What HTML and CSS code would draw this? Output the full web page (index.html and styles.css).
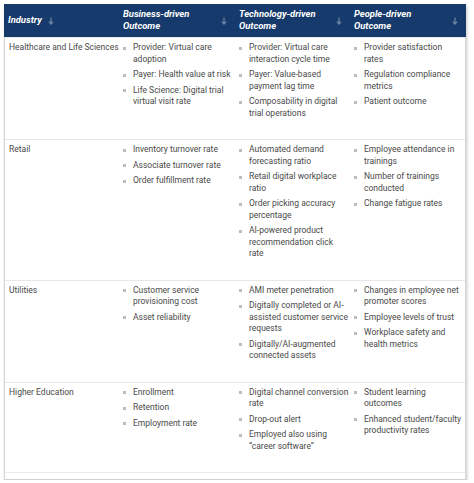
FILE: index.html
```html
<!DOCTYPE html>
<html>
<head>
<meta charset="utf-8">
<link rel="stylesheet" href="styles.css">
</head>
<body>
<div class="card">
  <div class="row head">
    <div class="hcell"><span class="htext">Industry</span><svg class="arrow" viewBox="0 0 6 8"><path d="M3 0.5V7M0.8 4.6L3 7 5.2 4.6"/></svg></div>
    <div class="hcell"><span class="htext">Business-driven Outcome</span><svg class="arrow" viewBox="0 0 6 8"><path d="M3 0.5V7M0.8 4.6L3 7 5.2 4.6"/></svg></div>
    <div class="hcell"><span class="htext">Technology-driven Outcome</span><svg class="arrow" viewBox="0 0 6 8"><path d="M3 0.5V7M0.8 4.6L3 7 5.2 4.6"/></svg></div>
    <div class="hcell"><span class="htext">People-driven Outcome</span><svg class="arrow" viewBox="0 0 6 8"><path d="M3 0.5V7M0.8 4.6L3 7 5.2 4.6"/></svg></div>
  </div>
  <div class="row">
    <div class="cell first">Healthcare and Life Sciences</div>
    <div class="cell"><ul>
      <li>Provider: Virtual care adoption</li>
      <li>Payer: Health value at risk</li>
      <li>Life Science: Digital trial virtual visit rate</li>
    </ul></div>
    <div class="cell"><ul>
      <li>Provider: Virtual care interaction cycle time</li>
      <li>Payer: Value-based payment lag time</li>
      <li>Composability in digital trial operations</li>
    </ul></div>
    <div class="cell last-col"><ul>
      <li>Provider satisfaction rates</li>
      <li>Regulation compliance metrics</li>
      <li>Patient outcome</li>
    </ul></div>
  </div>
  <div class="row">
    <div class="cell first">Retail</div>
    <div class="cell"><ul>
      <li>Inventory turnover rate</li>
      <li>Associate turnover rate</li>
      <li>Order fulfillment rate</li>
    </ul></div>
    <div class="cell"><ul>
      <li>Automated demand forecasting ratio</li>
      <li>Retail digital workplace ratio</li>
      <li>Order picking accuracy percentage</li>
      <li>AI-powered product recommendation click rate</li>
    </ul></div>
    <div class="cell last-col"><ul>
      <li>Employee attendance in trainings</li>
      <li>Number of trainings conducted</li>
      <li>Change fatigue rates</li>
    </ul></div>
  </div>
  <div class="row">
    <div class="cell first">Utilities</div>
    <div class="cell"><ul>
      <li>Customer service provisioning cost</li>
      <li>Asset reliability</li>
    </ul></div>
    <div class="cell"><ul>
      <li>AMI meter penetration</li>
      <li>Digitally completed or AI-assisted customer service requests</li>
      <li>Digitally/AI-augmented connected assets</li>
    </ul></div>
    <div class="cell last-col"><ul>
      <li>Changes in employee net promoter scores</li>
      <li>Employee levels of trust</li>
      <li>Workplace safety and health metrics</li>
    </ul></div>
  </div>
  <div class="row last">
    <div class="cell first">Higher Education</div>
    <div class="cell"><ul>
      <li>Enrollment</li>
      <li>Retention</li>
      <li>Employment rate</li>
    </ul></div>
    <div class="cell"><ul>
      <li>Digital channel conversion rate</li>
      <li>Drop-out alert</li>
      <li>Employed also using “career software”</li>
    </ul></div>
    <div class="cell last-col"><ul>
      <li>Student learning outcomes</li>
      <li>Enhanced student/faculty productivity rates</li>
    </ul></div>
  </div>
</div>
</body>
</html>
```
FILE: styles.css
```css
html, body {
  margin: 0;
  padding: 0;
  background: #ffffff;
}
body {
  font-family: Roboto, "Liberation Sans", sans-serif;
  color: #4a4a4a;
}
.card {
  margin: 4px 0 0 4px;
  width: 462px;
  box-sizing: border-box;
  border-left: 1px solid #d6d6d6;
  border-right: 1px solid #d6d6d6;
  border-bottom: 1px solid #cfcfcf;
  padding-bottom: 6px;
  box-shadow: 1px 2px 3px rgba(0, 0, 0, 0.22);
}
.row {
  display: grid;
  grid-template-columns: 114px 116px 115px 115px;
  border-top: 1px solid #e8e8e8;
}
.row.last {
  border-bottom: 1px solid #ececec;
}
.row.head {
  background: #163a6b;
  border-top: none;
  margin: 0 -1px;
  grid-template-columns: 115px 116px 115px 116px;
}
.hcell {
  display: flex;
  align-items: center;
  gap: 6px;
  padding: 4px 8px 5px 4px;
  height: 33px;
  box-sizing: border-box;
}
.htext {
  color: #ffffff;
  font-family: Roboto, "Liberation Sans", sans-serif;
  font-weight: bold;
  font-style: italic;
  font-size: 9.4px;
  line-height: 12px;
}
.arrow {
  width: 6px;
  height: 8px;
  flex: none;
  margin-top: 2px;
  fill: none;
  stroke: #6f86a8;
  stroke-width: 1.2;
}
.cell {
  padding: 4px 1px 20px 4px;
  font-size: 8.5px;
  line-height: 11.5px;
}
.cell.first {
  padding-right: 0;
  white-space: nowrap;
}
.cell.last-col {
  padding-right: 3px;
}
ul {
  list-style: none;
  margin: 0;
  padding: 0;
}
li {
  display: flex;
}
li::before {
  content: "";
  flex: none;
  width: 3px;
  height: 3px;
  background: #bdbdbd;
  margin: 4.5px 7px 0 0;
}
li + li {
  margin-top: 4px;
}
```
